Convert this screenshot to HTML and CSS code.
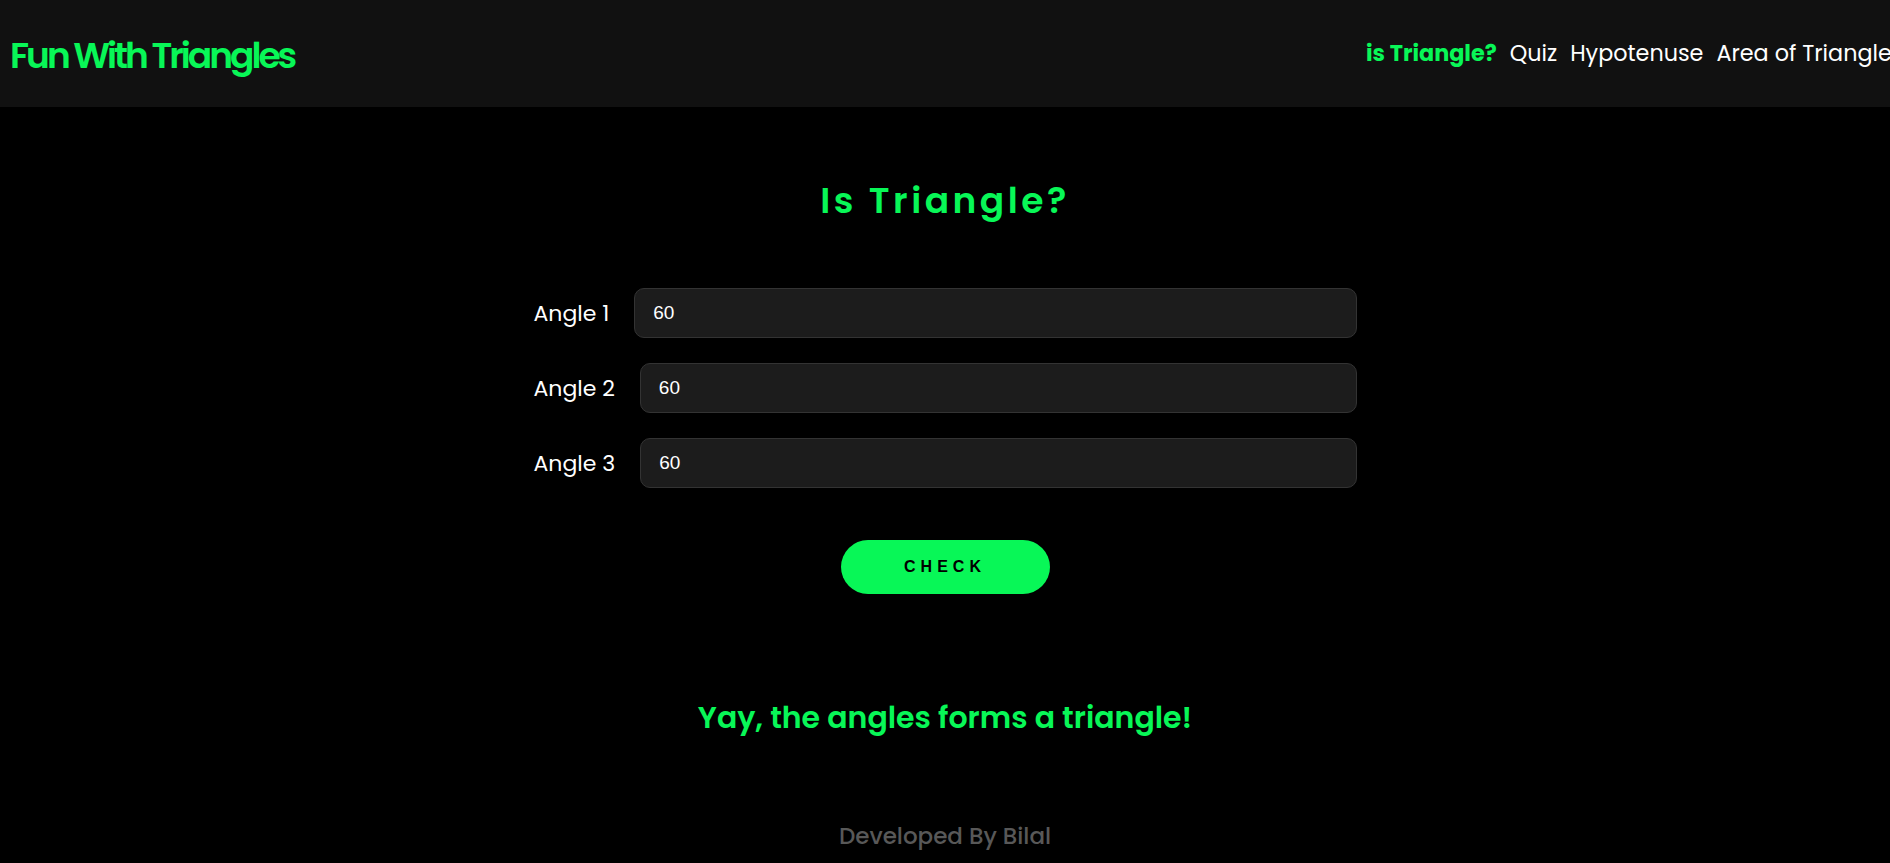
FILE: index.html
```html
<!DOCTYPE html>
<html lang="en">
<head>
  <meta charset="UTF-8">
  <title>Fun With Triangles</title>
  <link rel="stylesheet" href="styles.css">
</head>
<body>

  <header class="navbar">
    <a class="logo" href="#">Fun With Triangles</a>
    <ul class="nav-links">
      <li><a class="active" href="#">is Triangle?</a></li>
      <li><a href="#">Quiz</a></li>
      <li><a href="#">Hypotenuse</a></li>
      <li><a href="#">Area of Triangle</a></li>
    </ul>
  </header>

  <main class="container">
    <h1 class="title">Is Triangle?</h1>

    <div class="angle-form">
      <div class="angle-row">
        <label for="angle1">Angle 1</label>
        <input type="number" id="angle1" class="angle-input" value="60">
      </div>
      <div class="angle-row">
        <label for="angle2">Angle 2</label>
        <input type="number" id="angle2" class="angle-input" value="60">
      </div>
      <div class="angle-row">
        <label for="angle3">Angle 3</label>
        <input type="number" id="angle3" class="angle-input" value="60">
      </div>
    </div>

    <button class="check-btn" id="checkBtn">Check</button>

    <p class="output" id="output">Yay, the angles forms a triangle!</p>
  </main>

  <footer class="footer">Developed By Bilal</footer>

</body>
</html>
```

FILE: styles.css
```css
html, body {
  overflow-x: hidden;
}
body {
  margin: 0;
  background-color: #000;
  color: #fff;
  font-family: "Poppins", "Inter", sans-serif;
}
a {
  text-decoration: none;
}

.navbar {
  display: flex;
  align-items: center;
  height: 107px;
  padding: 0 10px;
  background-color: #111;
}
.logo {
  margin-top: 4px;
  color: #08f757;
  font-size: 36px;
  font-weight: 600;
  letter-spacing: -3px;
}
.nav-links {
  display: flex;
  gap: 13px;
  flex-shrink: 0;
  width: 514px;
  margin: 0 0 0 auto;
  padding: 0;
  list-style: none;
  white-space: nowrap;
}
.nav-links a {
  color: #fff;
  font-size: 22.3px;
}
.nav-links a.active {
  color: #08f757;
  font-weight: 700;
}

.container {
  text-align: center;
}
.title {
  margin: 66px 0 60px;
  color: #08f757;
  font-size: 36px;
  font-weight: 600;
  letter-spacing: 3.5px;
}

.angle-form {
  width: 823px;
  margin: 0 auto;
}
.angle-row {
  display: flex;
  align-items: center;
  margin-bottom: 25px;
}
.angle-row label {
  margin-right: 25px;
  font-size: 22px;
}
.angle-input {
  flex: 1;
  height: 50px;
  box-sizing: border-box;
  padding: 0 18px;
  background-color: #1c1c1c;
  border: 1px solid #333;
  border-radius: 10px;
  color: #fff;
  font-family: "Liberation Sans", Arial, sans-serif;
  font-size: 19px;
  outline: none;
}
.angle-input::-webkit-inner-spin-button {
  -webkit-appearance: none;
}

.check-btn {
  width: 209px;
  height: 54px;
  margin-top: 27px;
  background-color: #08f757;
  border: none;
  border-radius: 27px;
  color: #000;
  font-family: "Liberation Sans", Arial, sans-serif;
  font-size: 16px;
  font-weight: 700;
  letter-spacing: 5px;
  text-transform: uppercase;
  cursor: pointer;
}

.output {
  margin: 101px 0 0;
  color: #08f757;
  font-size: 30px;
  font-weight: 600;
}

.footer {
  margin-top: 78px;
  color: #585858;
  font-size: 23px;
  font-weight: 500;
  text-align: center;
}
```
